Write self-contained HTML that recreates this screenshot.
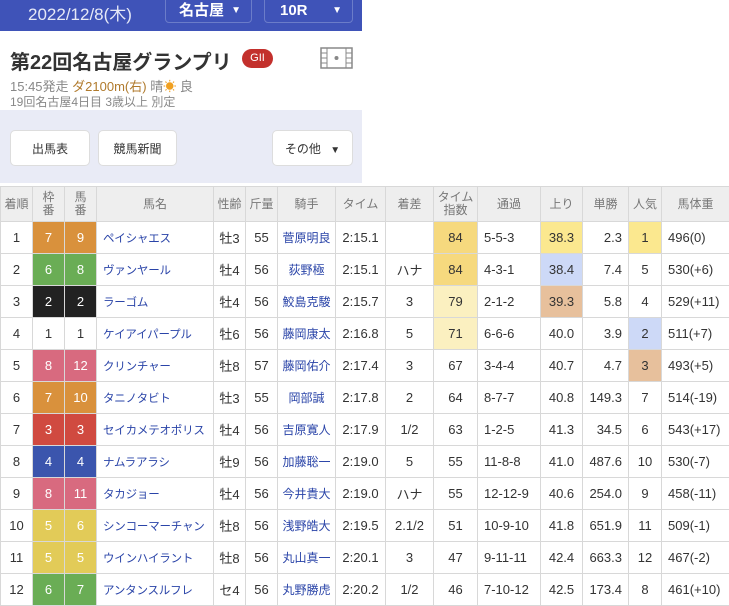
<!DOCTYPE html><html><head><meta charset="utf-8"><style>
body{margin:0;width:729px;height:600px;overflow:hidden;background:#fff;font-family:"Liberation Sans","Noto Sans CJK JP",sans-serif;position:relative}
.a{position:absolute}
.bar{left:0;top:0;width:362px;height:31px;background:#3f53b8}
.sel{top:-4px;height:27px;border:1px solid #6b7cc9;border-radius:4px;color:#fff;font-size:15px;font-weight:bold;line-height:27px;box-sizing:border-box}
.btn{top:130px;height:36px;background:#fff;border:1px solid #ddd;border-radius:5px;font-size:12px;color:#333;text-align:center;line-height:36px;box-sizing:border-box}
table{position:absolute;left:0;top:186px;border-collapse:collapse;table-layout:fixed;width:729px}
td,th{border:1px solid #d8d8d8;height:31px;padding:0;font-size:13px;color:#333;text-align:center;white-space:nowrap;overflow:hidden}
th{background:#eee;font-weight:normal;color:#777;font-size:12px;height:34px;line-height:13px}
td.n{text-align:left;padding-left:6px;color:#2a44a8;font-size:11.5px;letter-spacing:-0.2px}
td.j{color:#2a44a8;font-size:12px}
td.r{text-align:right;padding-right:6px}
td.l{text-align:left;padding-left:6px}
td.w{color:#fff}
.c7{background:#d9913c}.c6{background:#6aad55}.c2{background:#222}.c1{background:#fff;color:#333!important}.c8{background:#d86a7f}.c3{background:#d04a40}.c4{background:#3b55ad}.c5{background:#e2cb58}
.y1{background:#f6d97e}.y2{background:#fbf0c0}.ye{background:#fbe88f}.bl{background:#cdd9f7}.or{background:#e7c09c}
</style></head><body>
<div class="a bar"></div>
<div class="a" style="left:28px;top:0px;color:#e6e9f7;font-size:17px">2022/12/8(木)</div>
<div class="a sel" style="left:165px;width:87px;padding-left:13px">名古屋<span style="position:absolute;right:10px;font-size:10px">▼</span></div>
<div class="a sel" style="left:264px;width:89px;padding-left:15px">10R<span style="position:absolute;right:10px;font-size:10px">▼</span></div>
<div class="a" style="left:10px;top:46px;font-size:20px;font-weight:bold;color:#333">第22回名古屋グランプリ</div>
<div class="a" style="left:242px;top:49px;width:31px;height:19px;border-radius:10px;background:#c3302c;color:#fff;font-size:11px;text-align:center;line-height:19px">GII</div>
<svg class="a" style="left:320px;top:47px" width="33" height="22"><rect x="1" y="1" width="31" height="20" fill="none" stroke="#888" stroke-width="1.5"/><line x1="7" y1="1" x2="7" y2="21" stroke="#888"/><line x1="26" y1="1" x2="26" y2="21" stroke="#888"/><circle cx="16.5" cy="11" r="2" fill="#888"/><path d="M1 6h6M1 11h6M1 16h6M26 6h6M26 11h6M26 16h6" stroke="#888"/></svg>
<div class="a" style="left:10px;top:76px;font-size:13px;color:#888">15:45発走 <span style="color:#b07a2c">ダ2100m(右)</span> 晴<span style="color:#f0a020">☀</span> 良</div>
<div class="a" style="left:10px;top:93px;font-size:12px;color:#888">19回名古屋4日目 3歳以上 別定</div>
<div class="a" style="left:0;top:110px;width:362px;height:73px;background:#e9ebf6"></div>
<div class="a btn" style="left:10px;width:80px">出馬表</div>
<div class="a btn" style="left:98px;width:79px">競馬新聞</div>
<div class="a btn" style="left:272px;width:81px">その他 <span style="font-size:10px;margin-left:6px">▼</span></div>
<table>
<colgroup><col style="width:32px"><col style="width:32px"><col style="width:32px"><col style="width:117px"><col style="width:32px"><col style="width:32px"><col style="width:58px"><col style="width:50px"><col style="width:48px"><col style="width:44px"><col style="width:63px"><col style="width:42px"><col style="width:46px"><col style="width:33px"><col style="width:68px"></colgroup>
<tr><th>着順</th><th>枠<br>番</th><th>馬<br>番</th><th>馬名</th><th>性齢</th><th>斤量</th><th>騎手</th><th>タイム</th><th>着差</th><th>タイム<br>指数</th><th>通過</th><th>上り</th><th>単勝</th><th>人気</th><th>馬体重</th></tr>
<tr><td>1</td><td class="w c7">7</td><td class="w c7">9</td><td class="n">ペイシャエス</td><td>牡3</td><td>55</td><td class="j">菅原明良</td><td>2:15.1</td><td></td><td class="y1">84</td><td class="l">5-5-3</td><td class="ye">38.3</td><td class="r">2.3</td><td class="ye">1</td><td class="l">496(0)</td></tr>
<tr><td>2</td><td class="w c6">6</td><td class="w c6">8</td><td class="n">ヴァンヤール</td><td>牡4</td><td>56</td><td class="j">荻野極</td><td>2:15.1</td><td>ハナ</td><td class="y1">84</td><td class="l">4-3-1</td><td class="bl">38.4</td><td class="r">7.4</td><td>5</td><td class="l">530(+6)</td></tr>
<tr><td>3</td><td class="w c2">2</td><td class="w c2">2</td><td class="n">ラーゴム</td><td>牡4</td><td>56</td><td class="j">鮫島克駿</td><td>2:15.7</td><td>3</td><td class="y2">79</td><td class="l">2-1-2</td><td class="or">39.3</td><td class="r">5.8</td><td>4</td><td class="l">529(+11)</td></tr>
<tr><td>4</td><td class="w c1">1</td><td class="w c1">1</td><td class="n">ケイアイパープル</td><td>牡6</td><td>56</td><td class="j">藤岡康太</td><td>2:16.8</td><td>5</td><td class="y2">71</td><td class="l">6-6-6</td><td>40.0</td><td class="r">3.9</td><td class="bl">2</td><td class="l">511(+7)</td></tr>
<tr><td>5</td><td class="w c8">8</td><td class="w c8">12</td><td class="n">クリンチャー</td><td>牡8</td><td>57</td><td class="j">藤岡佑介</td><td>2:17.4</td><td>3</td><td>67</td><td class="l">3-4-4</td><td>40.7</td><td class="r">4.7</td><td class="or">3</td><td class="l">493(+5)</td></tr>
<tr><td>6</td><td class="w c7">7</td><td class="w c7">10</td><td class="n">タニノタビト</td><td>牡3</td><td>55</td><td class="j">岡部誠</td><td>2:17.8</td><td>2</td><td>64</td><td class="l">8-7-7</td><td>40.8</td><td class="r">149.3</td><td>7</td><td class="l">514(-19)</td></tr>
<tr><td>7</td><td class="w c3">3</td><td class="w c3">3</td><td class="n">セイカメテオポリス</td><td>牡4</td><td>56</td><td class="j">吉原寛人</td><td>2:17.9</td><td>1/2</td><td>63</td><td class="l">1-2-5</td><td>41.3</td><td class="r">34.5</td><td>6</td><td class="l">543(+17)</td></tr>
<tr><td>8</td><td class="w c4">4</td><td class="w c4">4</td><td class="n">ナムラアラシ</td><td>牡9</td><td>56</td><td class="j">加藤聡一</td><td>2:19.0</td><td>5</td><td>55</td><td class="l">11-8-8</td><td>41.0</td><td class="r">487.6</td><td>10</td><td class="l">530(-7)</td></tr>
<tr><td>9</td><td class="w c8">8</td><td class="w c8">11</td><td class="n">タカジョー</td><td>牡4</td><td>56</td><td class="j">今井貴大</td><td>2:19.0</td><td>ハナ</td><td>55</td><td class="l">12-12-9</td><td>40.6</td><td class="r">254.0</td><td>9</td><td class="l">458(-11)</td></tr>
<tr><td>10</td><td class="w c5">5</td><td class="w c5">6</td><td class="n">シンコーマーチャン</td><td>牡8</td><td>56</td><td class="j">浅野皓大</td><td>2:19.5</td><td>2.1/2</td><td>51</td><td class="l">10-9-10</td><td>41.8</td><td class="r">651.9</td><td>11</td><td class="l">509(-1)</td></tr>
<tr><td>11</td><td class="w c5">5</td><td class="w c5">5</td><td class="n">ウインハイラント</td><td>牡8</td><td>56</td><td class="j">丸山真一</td><td>2:20.1</td><td>3</td><td>47</td><td class="l">9-11-11</td><td>42.4</td><td class="r">663.3</td><td>12</td><td class="l">467(-2)</td></tr>
<tr><td>12</td><td class="w c6">6</td><td class="w c6">7</td><td class="n">アンタンスルフレ</td><td>セ4</td><td>56</td><td class="j">丸野勝虎</td><td>2:20.2</td><td>1/2</td><td>46</td><td class="l">7-10-12</td><td>42.5</td><td class="r">173.4</td><td>8</td><td class="l">461(+10)</td></tr>
</table>
</body></html>
